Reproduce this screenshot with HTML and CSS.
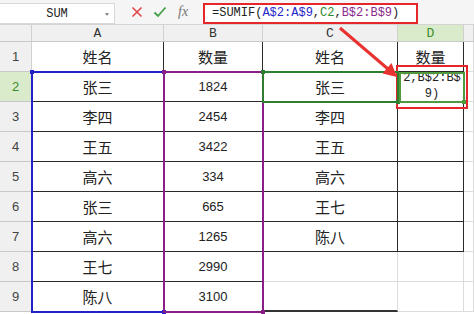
FILE: index.html
```html
<!DOCTYPE html>
<html lang="zh-CN">
<head>
    <meta charset="UTF-8">
    <meta name="viewport" content="width=device-width, initial-scale=1.0">
    <title>SUMIF</title>
    <link rel="stylesheet" href="styles.css">
</head>
<body>

<div class="toolbar">
    <div class="namebox">SUM<span class="caret"></span></div>
    <div class="buttons">
        <svg class="icon" width="12" height="12" viewBox="0 0 12 12"><path d="M1.5 1.5 L10.5 10.5 M10.5 1.5 L1.5 10.5" stroke="#e0474a" stroke-width="1.6" fill="none"/></svg>
        <svg class="icon" width="14" height="12" viewBox="0 0 14 12"><path d="M1.5 6.5 L5 10 L12.5 1.5" stroke="#43a047" stroke-width="1.8" fill="none"/></svg>
        <span class="fx">fx</span>
    </div>
    <div class="formula">=SUMIF(<span class="ref-a">A$2:A$9</span>,<span class="ref-c">C2</span>,<span class="ref-b">B$2:B$9</span>)</div>
</div>

<div class="sheet-wrap">
<div class="sheet">
    <!-- header row -->
    <div class="hd corner"></div>
    <div class="hd col">A</div>
    <div class="hd col">B</div>
    <div class="hd col">C</div>
    <div class="hd col on">D</div>
    <div class="hd"></div>

    <!-- row 1 -->
    <div class="hd row">1</div>
    <div class="c dk cjk">姓名</div>
    <div class="c dk cjk">数量</div>
    <div class="c dk cjk">姓名</div>
    <div class="c dk cjk">数量</div>
    <div class="c"></div>

    <div class="hd row on">2</div>
    <div class="c dk cjk">张三</div>
    <div class="c dk num">1824</div>
    <div class="c dk cjk">张三</div>
    <div class="c dk edit">2,B$2:B$
9)</div>
    <div class="c"></div>

    <div class="hd row">3</div>
    <div class="c dk cjk">李四</div>
    <div class="c dk num">2454</div>
    <div class="c dk cjk">李四</div>
    <div class="c dk"></div>
    <div class="c"></div>

    <div class="hd row">4</div>
    <div class="c dk cjk">王五</div>
    <div class="c dk num">3422</div>
    <div class="c dk cjk">王五</div>
    <div class="c dk"></div>
    <div class="c"></div>

    <div class="hd row">5</div>
    <div class="c dk cjk">高六</div>
    <div class="c dk num">334</div>
    <div class="c dk cjk">高六</div>
    <div class="c dk"></div>
    <div class="c"></div>

    <div class="hd row">6</div>
    <div class="c dk cjk">张三</div>
    <div class="c dk num">665</div>
    <div class="c dk cjk">王七</div>
    <div class="c dk"></div>
    <div class="c"></div>

    <div class="hd row">7</div>
    <div class="c dk cjk">高六</div>
    <div class="c dk num">1265</div>
    <div class="c dk cjk">陈八</div>
    <div class="c dk"></div>
    <div class="c"></div>

    <div class="hd row">8</div>
    <div class="c dk cjk">王七</div>
    <div class="c dk num">2990</div>
    <div class="c"></div>
    <div class="c"></div>
    <div class="c"></div>

    <div class="hd row">9</div>
    <div class="c dk cjk">陈八</div>
    <div class="c dk num">3100</div>
    <div class="c last"></div>
    <div class="c"></div>
    <div class="c"></div>
</div>

<!-- range highlights, same grid laid over the cells -->
<div class="sheet marks">
    <div class="sel sel-a"></div>
    <div class="sel sel-b"></div>
    <div class="sel sel-c"></div>
    <div class="sel sel-d"></div>
    <div class="callout"></div>
</div>
</div>

<svg class="arrow" width="474" height="314" viewBox="0 0 474 314">
    <line x1="340" y1="28" x2="388" y2="69" stroke="#e8322f" stroke-width="3"/>
    <polygon points="397,77 382.5,73.5 391.5,63" fill="#e8322f"/>
</svg>

</body>
</html>
```

FILE: styles.css
```css
body {
    margin: 0;
    font-family: "Liberation Sans", Arial, sans-serif;
    background: #fff;
    position: relative;
    overflow: hidden;
    height: 314px;
}
.toolbar {
    display: flex;
    height: 25px;
    background: #f5f5f5;
    border-bottom: 1px solid #d4d4d4;
    box-sizing: border-box;
}
.namebox {
    margin-top: 3px;
    width: 115px;
    height: 21px;
    box-sizing: border-box;
    background: #fff;
    border: 1px solid #d8d8d8;
    border-left: none;
    font-family: "Liberation Mono", monospace;
    font-size: 12px;
    line-height: 20px;
    color: #222;
    text-align: center;
    position: relative;
}
.caret {
    position: absolute;
    right: 5px;
    top: 9px;
    border-left: 2.5px solid transparent;
    border-right: 2.5px solid transparent;
    border-top: 3px solid #888;
}
.buttons {
    width: 88px;
    display: flex;
    align-items: center;
    gap: 10px;
    padding-left: 16px;
    box-sizing: border-box;
}
.fx {
    font-family: "Liberation Serif", serif;
    font-style: italic;
    font-size: 14px;
    color: #777;
    margin-left: 1px;
}
.formula {
    margin-top: 3px;
    width: 215px;
    height: 21px;
    box-sizing: border-box;
    background: #fff;
    border: 2px solid #e5262b;
    padding-left: 7px;
    font-family: "Liberation Mono", monospace;
    font-size: 12px;
    line-height: 17px;
    color: #222;
}
.ref-a { color: #2727c9; }
.ref-c { color: #2e8b34; }
.ref-b { color: #8c2a8c; }

.sheet-wrap {
    display: grid;
}
.sheet {
    grid-area: 1 / 1;
    display: grid;
    grid-template-columns: 32px 132px 99px 135px 66px 1fr;
    grid-template-rows: 17px repeat(9, 30px);
}
.sheet > div {
    box-sizing: border-box;
}
.marks {
    pointer-events: none;
}
.hd {
    background: #f0f0f0;
    border-right: 1px solid #d0d0d0;
    border-bottom: 1px solid #c8c8c8;
    color: #333;
    display: flex;
    align-items: center;
    justify-content: center;
}
.col {
    font-family: "Liberation Mono", monospace;
    font-size: 13px;
}
.row {
    font-size: 13px;
    color: #444;
}
.hd.on {
    background: #d9ebca;
    color: #3d8a2b;
}
.c {
    border-right: 1px solid #dcdcdc;
    border-bottom: 1px solid #dcdcdc;
    display: flex;
    align-items: center;
    justify-content: center;
    color: #222;
}
.c.dk {
    border-right-color: #2a2a2a;
    border-bottom-color: #2a2a2a;
}
.c.last {
    border-bottom: 2px solid #333;
}
.cjk {
    font-family: "Noto Sans CJK SC", sans-serif;
    font-size: 15px;
}
.num {
    font-size: 13px;
}
.edit {
    white-space: pre-line;
    align-items: flex-start;
    text-align: center;
    font-family: "Liberation Mono", monospace;
    font-size: 12px;
    line-height: 16px;
    padding-left: 3px;
    margin-top: -2px;
}

.sel {
    position: relative;
    margin: -1px;
    border: 2px solid;
}
.sel::before, .sel::after {
    content: "";
    position: absolute;
    width: 4px;
    height: 4px;
}
.sel::before { left: -3px; top: -3px; }
.sel::after { right: -3px; bottom: -3px; }
.sel-a {
    grid-column: 2;
    grid-row: 3 / span 8;
    border-color: #2222c8;
}
.sel-a::before, .sel-a::after { background: #2222c8; }
.sel-b {
    grid-column: 3;
    grid-row: 3 / span 8;
    border-color: #8a1f8a;
}
.sel-b::before, .sel-b::after { background: #8a1f8a; }
.sel-c {
    grid-column: 4;
    grid-row: 3;
    border-color: #2f7d2f;
}
.sel-c::before, .sel-c::after { background: #2f7d2f; }
.sel-d {
    grid-column: 5;
    grid-row: 3;
    border-color: #4f9a3c;
    margin: 0 -1px -1px 1px;
}
.sel-d::before { display: none; }
.sel-d::after { background: #4f9a3c; }
.callout {
    grid-column: 5;
    grid-row: 3;
    margin: -7px -4px -7px -2px;
    border: 2px solid #e5262b;
}

.arrow {
    position: absolute;
    left: 0;
    top: 0;
    pointer-events: none;
}
```
